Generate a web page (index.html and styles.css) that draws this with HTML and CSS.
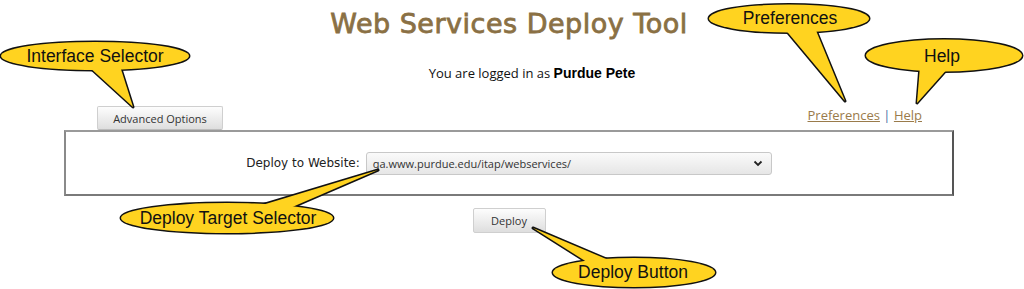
FILE: index.html
```html
<!DOCTYPE html>
<html>
<head>
<meta charset="utf-8">
<title>Web Services Deploy Tool</title>
<link rel="stylesheet" href="styles.css">
</head>
<body>
<div class="page">
  <h1 class="title">Web Services Deploy Tool</h1>
  <p class="login">You are logged in as <b class="user">Purdue Pete</b></p>
  <div class="toolbar">
    <button class="tab" type="button">Advanced Options</button>
    <div class="links"><a href="#">Preferences</a> <span class="sep">|</span> <a href="#">Help</a></div>
  </div>
  <div class="panel">
    <span class="label">Deploy to Website:</span>
    <div class="select">
      <span>qa.www.purdue.edu/itap/webservices/</span>
      <svg class="chev" width="10" height="7" viewBox="0 0 10 7"><path d="M1.5 1.5 L5 5 L8.5 1.5" fill="none" stroke="#222" stroke-width="1.8"/></svg>
    </div>
  </div>
  <div class="actions">
    <button class="deploy" type="button">Deploy</button>
  </div>
</div>
<svg class="callouts" width="1024" height="289" viewBox="0 0 1024 289">
  <g class="outline">
    <ellipse cx="95" cy="56" rx="94" ry="14"/>
    <polygon points="88,66 120,66 133,107"/>
    <ellipse cx="789" cy="18.5" rx="80" ry="14"/>
    <polygon points="784,28 815,28 845,101"/>
    <ellipse cx="944" cy="55.5" rx="78" ry="16"/>
    <polygon points="920,66 950,66 917,103"/>
    <ellipse cx="227" cy="218" rx="106" ry="15"/>
    <polygon points="252,208 290,208 378,170"/>
    <ellipse cx="634" cy="272.5" rx="81" ry="14.5"/>
    <polygon points="590,264 618,264 533,228"/>
  </g>
  <g class="fill">
    <ellipse cx="95" cy="56" rx="94" ry="14"/>
    <polygon points="88,66 120,66 133,107"/>
    <ellipse cx="789" cy="18.5" rx="80" ry="14"/>
    <polygon points="784,28 815,28 845,101"/>
    <ellipse cx="944" cy="55.5" rx="78" ry="16"/>
    <polygon points="920,66 950,66 917,103"/>
    <ellipse cx="227" cy="218" rx="106" ry="15"/>
    <polygon points="252,208 290,208 378,170"/>
    <ellipse cx="634" cy="272.5" rx="81" ry="14.5"/>
    <polygon points="590,264 618,264 533,228"/>
  </g>
  <g class="ctext">
    <text x="95" y="62">Interface Selector</text>
    <text x="790" y="24">Preferences</text>
    <text x="942" y="62">Help</text>
    <text x="228" y="224">Deploy Target Selector</text>
    <text x="633" y="278">Deploy Button</text>
  </g>
</svg>
</body>
</html>
```
FILE: styles.css
```css
html, body {
  margin: 0;
  padding: 0;
  background: #ffffff;
}
body {
  position: relative;
  width: 1024px;
  height: 289px;
  overflow: hidden;
  font-family: "Open Sans", "DejaVu Sans", sans-serif;
  color: #111;
}
.page {
  width: 890px;
  margin-left: 64px;
  padding-top: 8px;
  display: flex;
  flex-direction: column;
}
.title {
  margin: 0;
  text-align: center;
  font-family: "DejaVu Sans", sans-serif;
  font-size: 27px;
  line-height: 32px;
  font-weight: normal;
  letter-spacing: 0.5px;
  color: #8a7044;
  -webkit-text-stroke: 0.8px #8a7044;
}
.login {
  margin: 24px 0 0 0;
  padding-left: 46px;
  text-align: center;
  font-size: 13px;
  line-height: 18px;
}
.user {
  font-family: "Liberation Sans", Arial, sans-serif;
  font-size: 14px;
  font-weight: bold;
  color: #000;
}
.toolbar {
  margin-top: 24px;
  padding: 0 32px 0 33px;
  display: flex;
  justify-content: space-between;
  align-items: flex-end;
}
.tab {
  width: 126px;
  height: 24px;
  margin: 0;
  padding: 0;
  border: 1px solid #cfcfcf;
  border-bottom-color: #bcbcbc;
  border-radius: 2px;
  background: linear-gradient(#fdfdfd, #dedede);
  font-family: "Open Sans", sans-serif;
  font-size: 11px;
  color: #333;
}
.links {
  font-size: 13px;
  line-height: 18px;
  margin-bottom: 6px;
  color: #4a6fa5;
}
.links a {
  color: #9a7b4b;
  text-decoration: underline;
}
.sep {
  color: #4a6fa5;
}
.panel {
  height: 62px;
  border-style: solid;
  border-width: 2px;
  border-color: #9a9a9a #555555 #7a7a7a #8a8a8a;
  display: flex;
  justify-content: center;
  align-items: center;
  gap: 6px;
  margin-top: 0;
}
.label {
  font-family: "DejaVu Sans", sans-serif;
  font-size: 12px;
  color: #222;
}
.select {
  width: 406px;
  height: 23px;
  box-sizing: border-box;
  padding: 0 8px 0 6px;
  border: 1px solid #c8c8c8;
  border-radius: 3px;
  background: linear-gradient(#fafafa, #e6e6e6);
  display: flex;
  justify-content: space-between;
  align-items: center;
  font-size: 11px;
  color: #333;
}
.actions {
  margin-top: 12px;
  display: flex;
  justify-content: center;
}
.deploy {
  width: 73px;
  height: 25px;
  margin: 0;
  padding: 0;
  border: 1px solid #cfcfcf;
  border-radius: 2px;
  background: linear-gradient(#fdfdfd, #dedede);
  font-family: "Open Sans", sans-serif;
  font-size: 11px;
  color: #333;
}
.callouts {
  position: absolute;
  left: 0;
  top: 0;
  pointer-events: none;
}
.outline ellipse, .outline polygon {
  fill: #ffd320;
  stroke: #111;
  stroke-width: 3;
  stroke-linejoin: round;
}
.fill ellipse, .fill polygon {
  fill: #ffd320;
  stroke: none;
}
.ctext text {
  font-family: "Liberation Sans", Arial, sans-serif;
  font-size: 17.5px;
  fill: #111;
  text-anchor: middle;
}
```
